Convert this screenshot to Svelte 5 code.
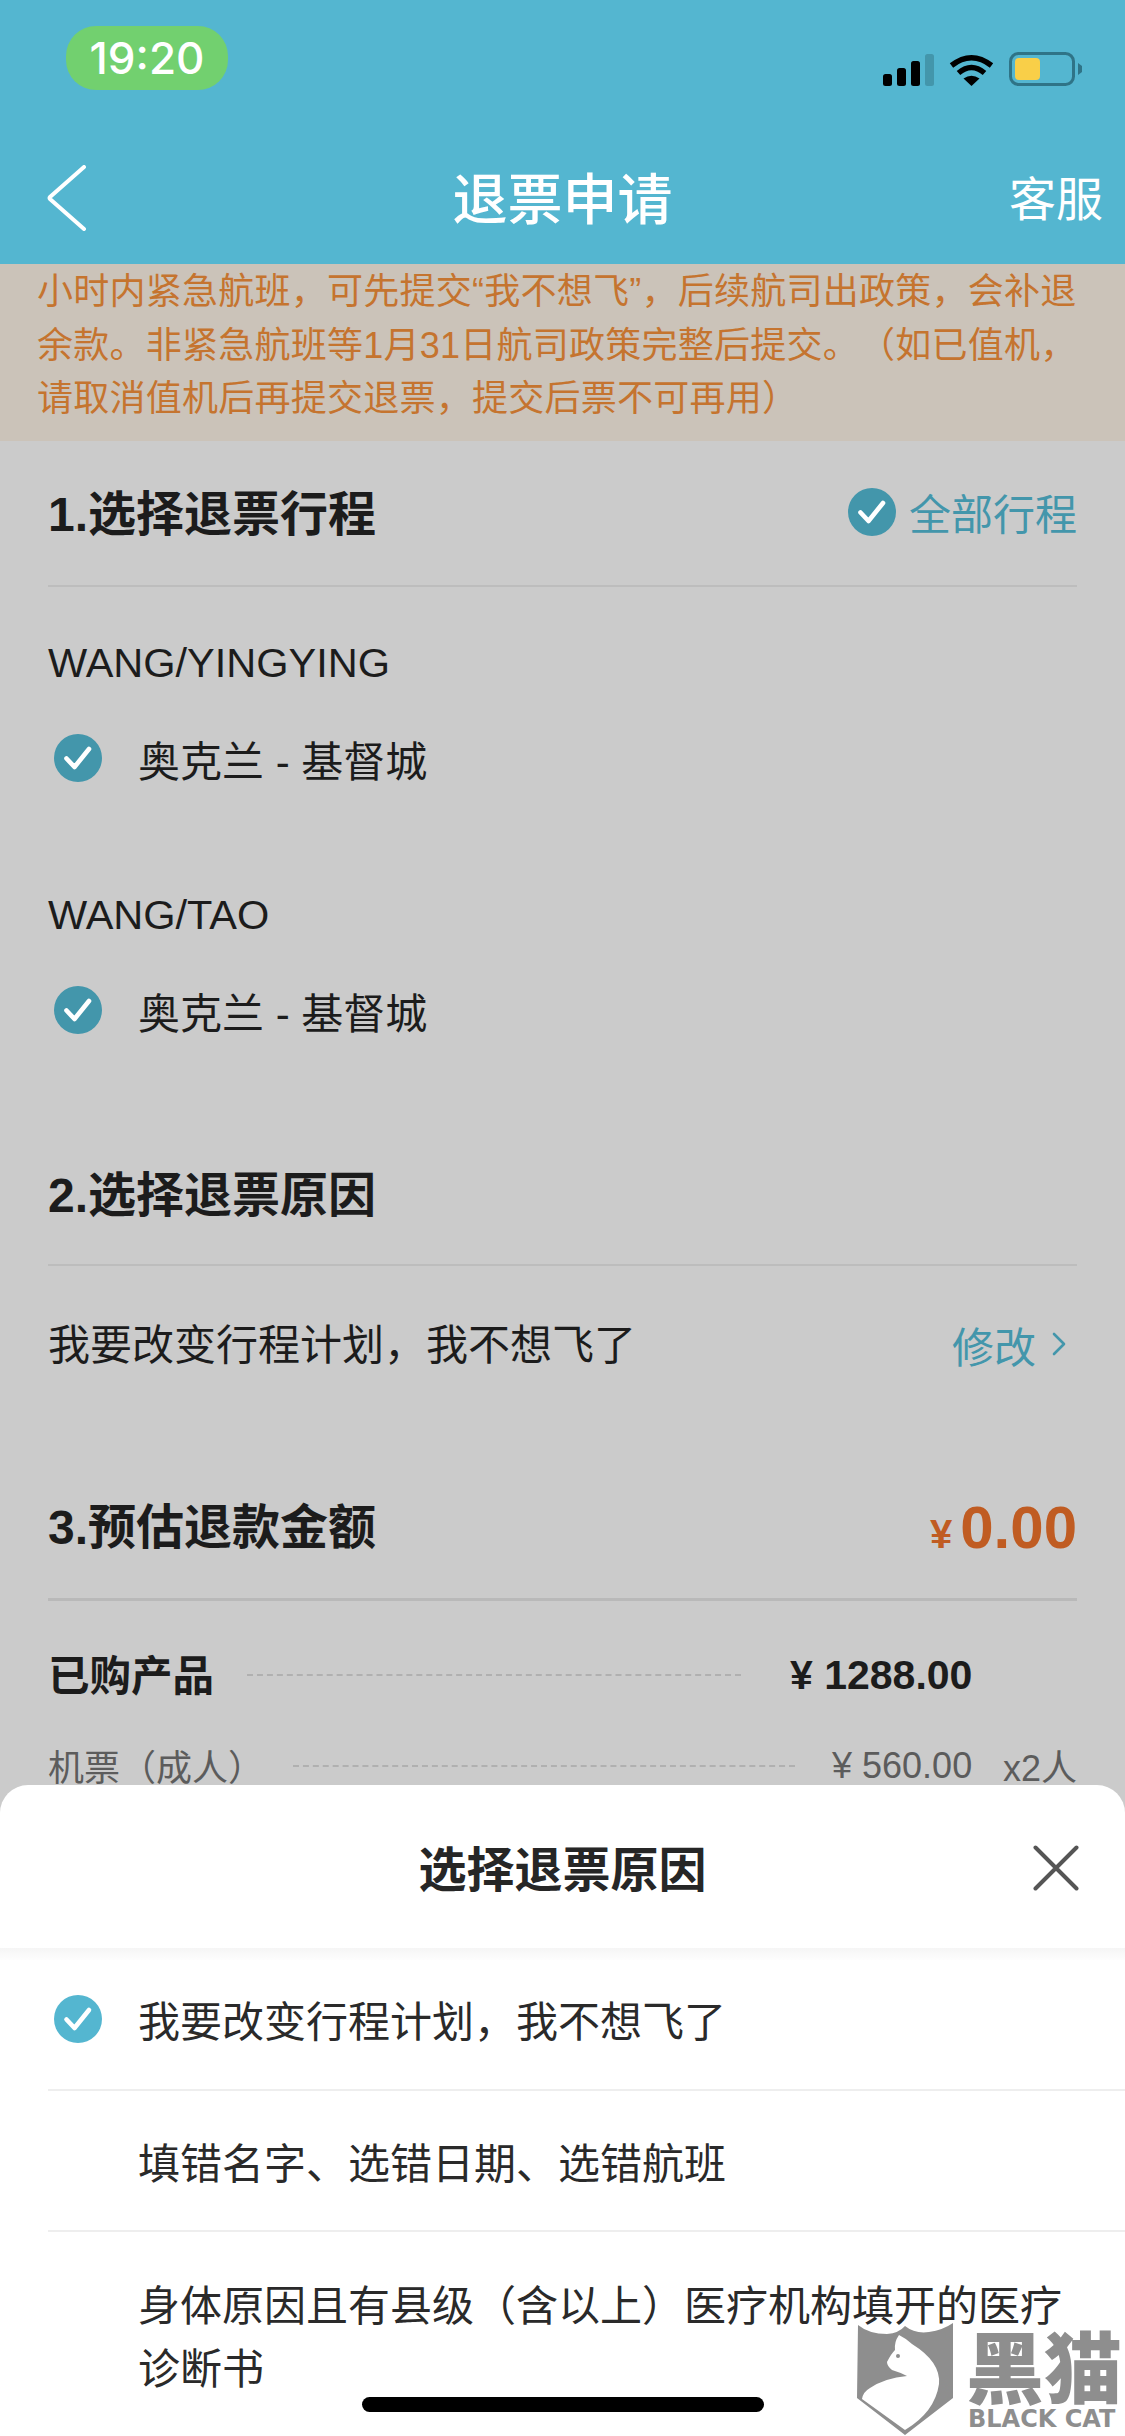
<script>
  const passengers = ['WANG/YINGYING', 'WANG/TAO'];
</script>

{#snippet check(color)}
  <svg class="check" width="48" height="48" viewBox="0 0 48 48" aria-hidden="true">
    <circle cx="24" cy="24" r="24" fill={color} />
    <path d="M12.5 24.5 L20.5 33 L35 15" fill="none" stroke="#fff" stroke-width="4.6" stroke-linecap="round" stroke-linejoin="round" />
  </svg>
{/snippet}

<div class="page">
  <header class="header">
    <div class="status">
      <div class="pill">19:20</div>
      <div class="indicators">
        <svg width="51" height="32" viewBox="0 0 51 32" aria-hidden="true">
          <rect x="0" y="20" width="9" height="12" rx="2.5" fill="#000" />
          <rect x="14" y="14" width="9" height="18" rx="2.5" fill="#000" />
          <rect x="28" y="7" width="9" height="25" rx="2.5" fill="#000" />
          <rect x="42" y="0" width="9" height="32" rx="2.5" fill="#4396AB" />
        </svg>
        <svg width="45" height="33" viewBox="0 0 45 33" aria-hidden="true">
          <path d="M2.5 12.5 Q22.5 -3 42.5 12.5" fill="none" stroke="#000" stroke-width="5.5" />
          <path d="M9.5 20 Q22.5 9 35.500 20" fill="none" stroke="#000" stroke-width="5.5" />
          <path d="M14.500 25.500 Q22.500 20 30.500 25.500 L22.500 33 Z" fill="#000" />
        </svg>
        <svg width="73" height="34" viewBox="0 0 73 34" aria-hidden="true">
          <rect x="1.500" y="1.500" width="63" height="31" rx="8" fill="none" stroke="#2F7487" stroke-width="3" />
          <rect x="6" y="6" width="25" height="22" rx="4" fill="#F9CF48" />
          <path d="M69 11 L73 14 Q74 17 73 20 L69 23 Z" fill="#2F7487" />
        </svg>
      </div>
    </div>
    <div class="nav">
      <svg class="back" width="40" height="66" viewBox="0 0 40 66" aria-hidden="true">
        <path d="M37 2 L3 32 Q2 33 3 34 L37 64" fill="none" stroke="#fff" stroke-width="4" stroke-linecap="round" />
      </svg>
      <h1 class="nav-title">退票申请</h1>
      <span class="service">客服</span>
    </div>
  </header>

  <div class="banner">小时内紧急航班，可先提交“我不想飞”，后续航司出政策，会补退余款。非紧急航班等1月31日航司政策完整后提交。（如已值机，请取消值机后再提交退票，提交后票不可再用）</div>

  <main class="content">
    <section>
      <div class="head head1">
        <h2>1.选择退票行程</h2>
        <div class="all">{@render check('#4396AB')}<span>全部行程</span></div>
      </div>
      {#each passengers as name}
        <div class="passenger">
          <div class="name">{name}</div>
          <div class="route">{@render check('#4396AB')}<span>奥克兰 - 基督城</span></div>
        </div>
      {/each}
    </section>

    <section class="sec2">
      <div class="head head2">
        <h2>2.选择退票原因</h2>
      </div>
      <div class="reason">
        <span>我要改变行程计划，我不想飞了</span>
        <span class="edit">修改
          <svg width="14" height="24" viewBox="0 0 14 24" aria-hidden="true">
            <path d="M2 2 L12 12 L2 22" fill="none" stroke="#4396AB" stroke-width="2.600" stroke-linecap="round" stroke-linejoin="round" />
          </svg>
        </span>
      </div>
    </section>

    <section>
      <div class="head head3">
        <h2>3.预估退款金额</h2>
        <div class="refund"><small>¥</small>0.00</div>
      </div>
      <div class="line total">
        <span class="label">已购产品</span>
        <i class="dash d1"></i>
        <span class="amount">¥ 1288.00</span>
      </div>
      <div class="line item">
        <span class="label">机票（成人）</span>
        <i class="dash d2"></i>
        <span class="amount">¥ 560.00</span>
        <span class="qty">x2人</span>
      </div>
    </section>
  </main>

  <aside class="sheet">
    <div class="sheet-head">
      <h3>选择退票原因</h3>
      <svg class="close" width="46" height="46" viewBox="0 0 46 46" aria-hidden="true">
        <path d="M2.500 2.500 L43.500 43.500 M43.500 2.500 L2.500 43.500" stroke="#555" stroke-width="4" stroke-linecap="round" />
      </svg>
    </div>
    <div class="band"></div>
    <div class="opt first">{@render check('#54B6D0')}<span>我要改变行程计划，我不想飞了</span></div>
    <div class="opt plain second"><span>填错名字、选错日期、选错航班</span></div>
    <div class="opt plain third"><span>身体原因且有县级（含以上）医疗机构填开的医疗诊断书</span></div>
  </aside>

  <div class="watermark" aria-label="黑猫 BLACK CAT">
    <svg width="96" height="114" viewBox="0 0 96 114" aria-hidden="true">
      <path d="M1 3 Q12 12 30 12 Q42 11 48 4 Q58 12 72 10 Q86 8 96 1 L96 76 L48 113 L0 76 Z" fill="#8E8E8E" />
      <path d="M42 13 Q50 17 55 22 Q84 40 82 62 Q78 90 48 108 L5 77 Q6 70 13 66 Q28 56 50 54 Q42 50 35 48 Q30 44 30 40 Q34 32 38 28 Q37 20 42 13 Z" fill="#fff" />
      <circle cx="41" cy="34" r="2" fill="#8E8E8E" />
    </svg>
    <div class="wm-text">
      <span class="wm-cn">黑猫</span>
      <span class="wm-en">BLACK CAT</span>
    </div>
  </div>

  <div class="home"></div>
</div>

<style>
  :global(body) {
    margin: 0;
    background: #cbcbcb;
  }
  .page {
    position: relative;
    width: 1125px;
    height: 2436px;
    overflow: hidden;
    background: #cbcbcb;
    color: #1c1c1c;
    font-family: "Liberation Sans", "Noto Sans CJK SC", sans-serif;
    font-size: 42px;
    text-spacing-trim: space-all;
    font-feature-settings: "palt" 0, "chws" 0;
  }
  h1, h2, h3 {
    margin: 0;
  }
  .header {
    height: 264px;
    background: #54b6d0;
    color: #fff;
    display: flex;
    flex-direction: column;
  }
  .status {
    height: 131px;
    box-sizing: border-box;
    padding: 26px 43px 0 66px;
    display: flex;
    justify-content: space-between;
    align-items: flex-start;
  }
  .pill {
    width: 162px;
    height: 64px;
    border-radius: 30px;
    background: #72d06f;
    display: flex;
    align-items: center;
    justify-content: center;
    font-size: 44px;
    font-family: "Inter", "Liberation Sans", sans-serif;
    font-weight: 500;
    color: #fff;
  }
  .indicators {
    display: flex;
    align-items: flex-end;
    gap: 15px;
    margin-top: 26px;
  }
  .nav {
    height: 133px;
    box-sizing: border-box;
    padding: 0 22px;
    display: grid;
    grid-template-columns: 1fr auto 1fr;
    align-items: center;
  }
  .back {
    margin-left: 25px;
  }
  .nav-title {
    font-size: 55px;
    font-weight: 500;
    padding-bottom: 5px;
  }
  .service {
    justify-self: end;
    font-size: 47px;
    padding-bottom: 5px;
  }
  .banner {
    height: 177px;
    box-sizing: border-box;
    background: #cbc3b9;
    color: #c5742f;
    font-size: 36px;
    letter-spacing: 0.25px;
    line-height: 53.500px;
    padding: 1px 37px 0;
  }
  .content {
    padding: 0 48px;
  }
  .head {
    height: 144px;
    display: flex;
    align-items: center;
    justify-content: space-between;
    border-bottom: 2px solid #bdbdbd;
  }
  .head h2 {
    font-size: 48px;
    font-weight: 700;
    color: #1c1c1c;
  }
  .head1 h2 {
    padding-bottom: 7px;
  }
  .head2 h2 {
    padding-bottom: 9px;
  }
  .head3 h2 {
    padding-bottom: 10px;
  }
  .all {
    display: flex;
    align-items: center;
    gap: 13px;
    color: #4396ab;
    font-size: 42px;
    padding-bottom: 3px;
  }
  .check {
    flex: none;
    display: block;
  }
  .passenger {
    display: flex;
    flex-direction: column;
    gap: 12px;
    padding: 38px 0 30px;
  }
  .name {
    height: 76px;
    line-height: 76px;
    font-size: 41.500px;
  }
  .route {
    height: 90px;
    padding: 0 0 6px 6px;
    display: flex;
    align-items: center;
    gap: 36px;
  }
  .sec2 {
    margin-top: 36px;
  }
  .head2 {
    height: 137px;
  }
  .reason {
    height: 151px;
    padding-bottom: 15px;
    margin-bottom: 26px;
    display: flex;
    align-items: center;
    justify-content: space-between;
  }
  .edit {
    display: flex;
    align-items: center;
    gap: 16px;
    color: #4396ab;
    padding-right: 11px;
    margin-top: 5px;
  }
  .head3 {
    height: 140px;
    border-bottom: 3px solid #b9b9b9;
  }
  .refund {
    color: #c05c22;
    font-size: 60px;
    font-weight: 700;
    line-height: 1;
  }
  .refund small {
    font-size: 40px;
    font-weight: 700;
    margin-right: 8px;
  }
  .line {
    display: flex;
    align-items: center;
  }
  .total {
    height: 90px;
    margin-top: 29px;
  }
  .total .label {
    font-size: 41.500px;
    font-weight: 700;
    padding-bottom: 4px;
  }
  .total .amount {
    font-size: 41px;
    font-weight: 700;
    margin-left: 49px;
  }
  .item {
    height: 92px;
    color: #5c5c5c;
    font-size: 36px;
  }
  .item .label,
  .qty {
    padding-bottom: 2px;
  }
  .dash {
    display: block;
    height: 0;
    border-top: 2px dashed #b0b0b0;
  }
  .d1 {
    width: 494px;
    margin-left: 33px;
  }
  .d2 {
    width: 502px;
    margin-left: 29px;
  }
  .item .amount {
    font-size: 36px;
    margin-left: 37px;
  }
  .qty {
    margin-left: auto;
  }
  .sheet {
    position: absolute;
    left: 0;
    right: 0;
    bottom: 0;
    height: 651px;
    background: #fff;
    border-radius: 28px 28px 0 0;
  }
  .sheet-head {
    height: 163px;
    position: relative;
    display: flex;
    align-items: center;
    justify-content: center;
    box-sizing: border-box;
  }
  .sheet-head h3 {
    font-size: 48px;
    font-weight: 700;
    color: #262626;
    padding-bottom: 2px;
  }
  .close {
    position: absolute;
    right: 46px;
    top: 60px;
  }
  .band {
    height: 12px;
    background: linear-gradient(#f5f5f5, #fdfdfd);
  }
  .opt {
    margin-left: 48px;
    border-bottom: 2px solid #eeeeee;
    display: flex;
    align-items: center;
    gap: 36px;
    color: #2a2a2a;
  }
  .opt .check {
    margin-left: 6px;
  }
  .first {
    height: 117px;
    padding-bottom: 12px;
  }
  .plain {
    padding-left: 90px;
    padding-right: 48px;
  }
  .second {
    height: 139px;
  }
  .third {
    border-bottom: none;
    padding-top: 43px;
    line-height: 63px;
    align-items: flex-start;
  }
  .watermark {
    position: absolute;
    left: 857px;
    top: 2322px;
    width: 268px;
    display: flex;
    gap: 13px;
    pointer-events: none;
  }
  .wm-text {
    display: flex;
    flex-direction: column;
    color: #8e8e8e;
  }
  .wm-cn {
    font-family: "Noto Sans CJK SC", sans-serif;
    font-size: 78px;
    font-weight: 900;
    line-height: 84px;
    white-space: nowrap;
  }
  .wm-en {
    font-family: "DejaVu Sans", sans-serif;
    font-size: 24px;
    font-weight: 700;
    line-height: 26px;
    margin-left: 2px;
    white-space: nowrap;
  }
  .home {
    position: absolute;
    left: 362px;
    top: 2397px;
    width: 402px;
    height: 15px;
    border-radius: 8px;
    background: #000;
  }
</style>
